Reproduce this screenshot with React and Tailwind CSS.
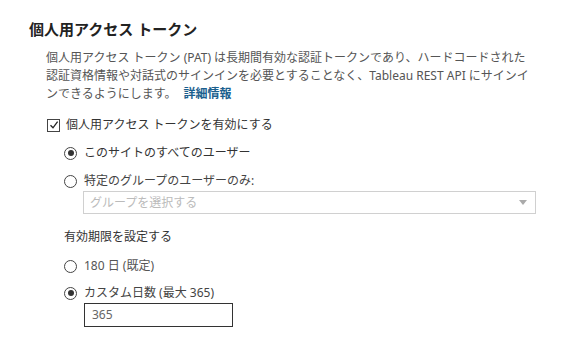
import React from "react";

function Radio({ checked }) {
  return (
    <span className="relative inline-flex h-[13px] w-[13px] shrink-0 items-center justify-center rounded-full border border-[#444] bg-white">
      {checked && <span className="h-[6px] w-[6px] rounded-full bg-[#333]" />}
    </span>
  );
}

function Checkbox() {
  return (
    <span className="inline-flex h-[13px] w-[13px] shrink-0 items-center justify-center border border-[#444] bg-white">
      <svg width="10" height="10" viewBox="0 0 10 10">
        <path d="M1.5 5.2 L4 7.8 L8.6 1.6" fill="none" stroke="#222" strokeWidth="1.3" />
      </svg>
    </span>
  );
}

export default function App() {
  return (
    <div
      className="h-[338px] w-[584px] bg-white"
      style={{ fontFamily: '"Noto Sans", "Noto Sans CJK JP", sans-serif' }}
    >
      <div className="pl-[29px] pt-[19px]">
        <div className="text-[15px] font-bold leading-[20px] text-[#222]">
          個人用アクセス トークン
        </div>
      </div>
      <div className="mt-[10px] pl-[46px] text-[12px] leading-[18px] text-[#555]">
        個人用アクセス トークン (PAT) は長期間有効な認証トークンであり、ハードコードされた
        <br />
        認証資格情報や対話式のサインインを必要とすることなく、Tableau REST API にサインイ
        <br />
        ンできるようにします。
        <span className="ml-[7px] font-bold text-[#1a5f8e]">詳細情報</span>
      </div>
      <div className="mt-[13px] flex items-center pl-[47px] text-[12px] leading-[18px] text-[#333]">
        <Checkbox />
        <span className="ml-[6px]">個人用アクセス トークンを有効にする</span>
      </div>
      <div className="mt-[10px] flex items-center pl-[64px] text-[12px] leading-[18px] text-[#333]">
        <Radio checked />
        <span className="ml-[7px]">このサイトのすべてのユーザー</span>
      </div>
      <div className="mt-[10px] flex items-center pl-[64px] text-[12px] leading-[18px] text-[#444]">
        <Radio />
        <span className="ml-[7px]">特定のグループのユーザーのみ:</span>
      </div>
      <div className="ml-[83px] mt-[1px] flex h-[23px] w-[453px] items-center justify-between border border-[#d0d0d0] bg-white pl-[6px] pr-[8px] text-[12px] text-[#bbb]">
        <span>グループを選択する</span>
        <svg width="8" height="5" viewBox="0 0 8 5">
          <path d="M0 0 L8 0 L4 5 Z" fill="#aaa" />
        </svg>
      </div>
      <div className="mt-[14px] pl-[64px] text-[12px] leading-[18px] text-[#333]">
        有効期限を設定する
      </div>
      <div className="mt-[11px] flex items-center pl-[64px] text-[12px] leading-[18px] text-[#555]">
        <Radio />
        <span className="ml-[7px]">180 日 (既定)</span>
      </div>
      <div className="mt-[9px] flex items-center pl-[64px] text-[12px] leading-[18px] text-[#444]">
        <Radio checked />
        <span className="ml-[7px]">カスタム日数 (最大 365)</span>
      </div>
      <div className="ml-[84px] mt-[1px] flex h-[24px] w-[149px] items-center border border-[#333] bg-white pl-[7px] text-[12px] text-[#666]">
        365
      </div>
    </div>
  );
}
